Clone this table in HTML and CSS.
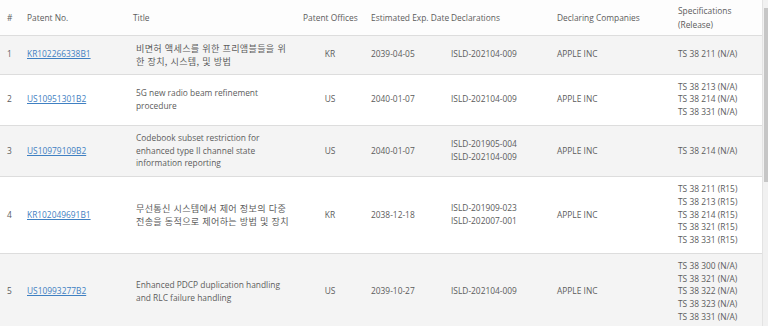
FILE: index.html
```html
<!DOCTYPE html>
<html lang="en">
<head>
<meta charset="utf-8">
<title>Patents</title>
<link rel="stylesheet" href="styles.css">
</head>
<body>
<div class="frame">
  <div class="viewport">
    <table class="patents">
      <colgroup>
        <col class="c-num"><col class="c-no"><col class="c-title"><col class="c-off">
        <col class="c-date"><col class="c-decl"><col class="c-comp"><col class="c-spec">
      </colgroup>
      <thead>
        <tr>
          <th>#</th>
          <th>Patent No.</th>
          <th>Title</th>
          <th>Patent Offices</th>
          <th>Estimated Exp. Date</th>
          <th>Declarations</th>
          <th>Declaring Companies</th>
          <th class="wrap">Specifications (Release)</th>
        </tr>
      </thead>
      <tbody>
        <tr>
          <td>1</td>
          <td><a href="#">KR102266338B1</a></td>
          <td class="title" lang="ko">비면허 액세스를 위한 프리앰블들을 위<br>한 장치, 시스템, 및 방법</td>
          <td class="center">KR</td>
          <td>2039-04-05</td>
          <td>ISLD-202104-009</td>
          <td>APPLE INC</td>
          <td>TS 38 211 (N/A)</td>
        </tr>
        <tr>
          <td>2</td>
          <td><a href="#">US10951301B2</a></td>
          <td class="title">5G new radio beam refinement procedure</td>
          <td class="center">US</td>
          <td>2040-01-07</td>
          <td>ISLD-202104-009</td>
          <td>APPLE INC</td>
          <td>TS 38 213 (N/A)<br>TS 38 214 (N/A)<br>TS 38 331 (N/A)</td>
        </tr>
        <tr>
          <td>3</td>
          <td><a href="#">US10979109B2</a></td>
          <td class="title">Codebook subset restriction for enhanced type II channel state information reporting</td>
          <td class="center">US</td>
          <td>2040-01-07</td>
          <td>ISLD-201905-004<br>ISLD-202104-009</td>
          <td>APPLE INC</td>
          <td>TS 38 214 (N/A)</td>
        </tr>
        <tr>
          <td>4</td>
          <td><a href="#">KR102049691B1</a></td>
          <td class="title" lang="ko">무선통신 시스템에서 제어 정보의 다중<br>전송을 동적으로 제어하는 방법 및 장치</td>
          <td class="center">KR</td>
          <td>2038-12-18</td>
          <td>ISLD-201909-023<br>ISLD-202007-001</td>
          <td>APPLE INC</td>
          <td>TS 38 211 (R15)<br>TS 38 213 (R15)<br>TS 38 214 (R15)<br>TS 38 321 (R15)<br>TS 38 331 (R15)</td>
        </tr>
        <tr>
          <td>5</td>
          <td><a href="#">US10993277B2</a></td>
          <td class="title">Enhanced PDCP duplication handling and RLC failure handling</td>
          <td class="center">US</td>
          <td>2039-10-27</td>
          <td>ISLD-202104-009</td>
          <td>APPLE INC</td>
          <td>TS 38 300 (N/A)<br>TS 38 321 (N/A)<br>TS 38 322 (N/A)<br>TS 38 323 (N/A)<br>TS 38 331 (N/A)</td>
        </tr>
      </tbody>
    </table>
  </div>
  <div class="scrollbar"><div class="thumb"></div></div>
</div>
</body>
</html>
```
FILE: styles.css
```css
html, body {
  margin: 0;
  padding: 0;
  background: #ffffff;
}

body {
  font-family: "Open Sans", "Noto Sans CJK KR", sans-serif;
  font-size: 8.4px;
  line-height: 12.75px;
  color: #5c5c5c;
}

.frame {
  display: flex;
  height: 326px;
  overflow: hidden;
}

.viewport {
  width: 762px;
  flex: none;
  overflow: hidden;
}

.scrollbar {
  flex: 1;
  background: #f1f1f1;
  border-left: 1px solid #e3e3e3;
  padding: 8px 0 0 1px;
}

.thumb {
  height: 174px;
  background: #c6c6c6;
}

.patents {
  width: 762px;
  table-layout: fixed;
  border-collapse: collapse;
}

.c-num { width: 20px; }
.c-no { width: 106px; }
.c-title { width: 170px; }
.c-off { width: 68px; }
.c-date { width: 80px; }
.c-decl { width: 106px; }
.c-comp { width: 121px; }
.c-spec { width: 91px; }

.patents th {
  font-weight: normal;
  text-align: left;
  vertical-align: middle;
  white-space: nowrap;
  line-height: 14px;
  padding: 4px 7px 3px;
  border-bottom: 1px solid #dddddd;
  background: #fdfdfd;
}

.patents th.wrap {
  white-space: normal;
}

.patents td {
  vertical-align: middle;
  padding: 6px 7px;
  border-bottom: 1px solid #dddddd;
}

.patents td.title {
  padding-left: 10px;
}

.patents tbody tr:nth-child(odd) td {
  background: #f4f4f4;
}

.patents td.center {
  text-align: center;
}

.patents a {
  color: #3f80c2;
  text-decoration: underline;
}

.patents td:lang(ko) {
  font-family: "Noto Sans CJK KR", sans-serif;
  font-size: 9.1px;
  letter-spacing: 0.3px;
  white-space: nowrap;
}
```
